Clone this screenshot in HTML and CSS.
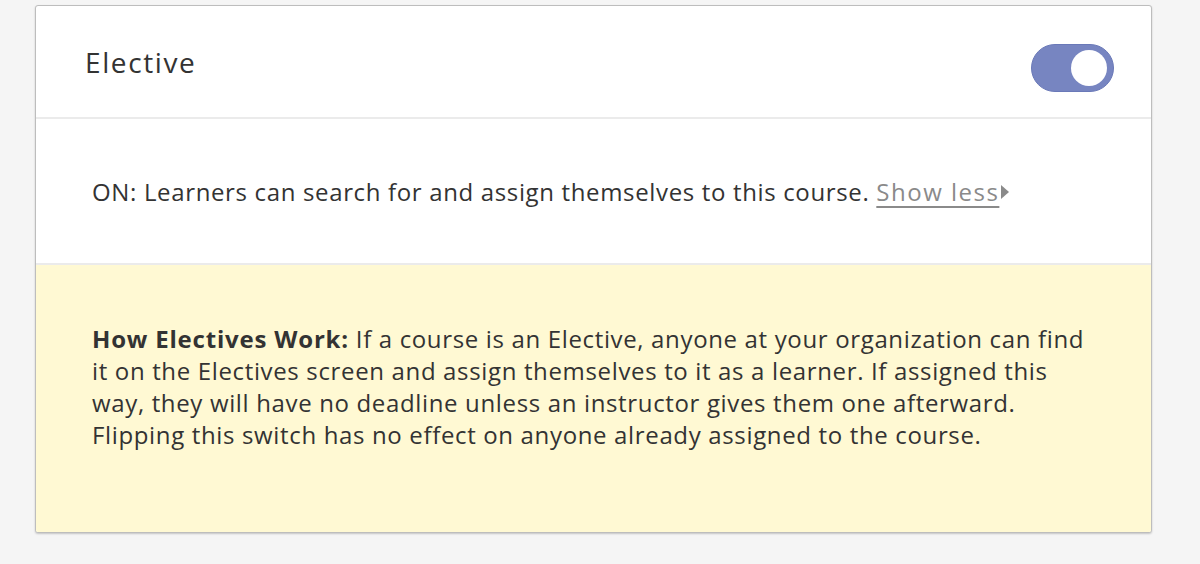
FILE: index.html
```html
<!DOCTYPE html>
<html>
<head>
<meta charset="utf-8">
<link rel="stylesheet" href="styles.css">
</head>
<body>
<div class="card">
  <div class="header">
    <h2 class="title">Elective</h2>
    <div class="toggle"><div class="knob"></div></div>
  </div>
  <div class="status">
    <p>ON: Learners can search for and assign themselves to this course. <a class="more" href="#">Show less</a><span class="caret"></span></p>
  </div>
  <div class="info">
    <p><strong>How Electives Work:</strong> If a course is an Elective, anyone at your organization can find it on the Electives screen and assign themselves to it as a learner. If assigned this way, they will have no deadline unless an instructor gives them one afterward. Flipping this switch has no effect on anyone already assigned to the course.</p>
  </div>
</div>
</body>
</html>
```
FILE: styles.css
```css
html, body { margin: 0; padding: 0; }
body {
  background: #f5f5f5;
  font-family: "Open Sans", Lato, sans-serif;
  color: #333;
  padding: 5px 0 0 35px;
  height: 564px;
  box-sizing: border-box;
  overflow: hidden;
}
.card {
  width: 1117px;
  height: 528px;
  box-sizing: border-box;
  background: #fff;
  border: 1px solid #bdbdbd;
  border-radius: 3px;
  box-shadow: 0 1px 2px rgba(0,0,0,0.2);
  display: flex;
  flex-direction: column;
  overflow: hidden;
}
.header {
  height: 113px;
  box-sizing: border-box;
  border-bottom: 2px solid #ebebeb;
  display: flex;
  align-items: flex-start;
  justify-content: space-between;
  padding: 0 37px 0 49px;
}
.title {
  margin: 37px 0 0 0;
  font-size: 28px;
  line-height: 38px;
  font-weight: 400;
  letter-spacing: 1.6px;
  color: #333;
}
.toggle {
  margin-top: 38px;
  width: 83px;
  height: 48px;
  box-sizing: border-box;
  border-radius: 24px;
  background: #7785c1;
  border: 1px solid #6a79b8;
  display: flex;
  align-items: center;
  justify-content: flex-end;
  padding-right: 6px;
}
.knob {
  width: 36px;
  height: 36px;
  border-radius: 50%;
  background: #fff;
}
.status {
  height: 146px;
  box-sizing: border-box;
  border-bottom: 2px solid #ebebeb;
  display: flex;
  align-items: center;
  padding: 0 56px;
}
.status p {
  margin: 0;
  font-size: 24px;
  letter-spacing: 0.65px;
  color: #333;
}
.more {
  color: #8a8a8a;
  letter-spacing: 1.5px;
  text-decoration: underline;
  text-decoration-thickness: 2px;
  text-underline-offset: 5px;
}
.caret {
  display: inline-block;
  width: 0; height: 0;
  border-left: 8px solid #8a8a8a;
  border-top: 7px solid transparent;
  border-bottom: 7px solid transparent;
  margin-left: 2px;
  vertical-align: 2px;
}
.info {
  flex: 1;
  background: #fff9d3;
  padding: 58px 56px 0 56px;
}
.info p {
  margin: 0;
  font-size: 24px;
  line-height: 32px;
  letter-spacing: 0.65px;
  color: #333;
}
.info strong { font-weight: 700; letter-spacing: 0.8px; }
```
